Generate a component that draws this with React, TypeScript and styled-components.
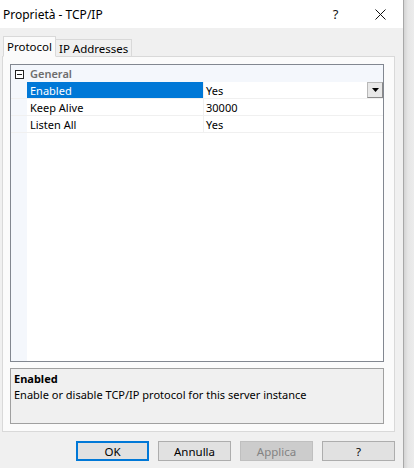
import { createGlobalStyle } from 'styled-components';
import styled from 'styled-components';

const GlobalStyle = createGlobalStyle`
  html, body {
    margin: 0;
    padding: 0;
    background: #e4e4e4;
  }
  body {
    font-family: 'Noto Sans', 'Open Sans', sans-serif;
    font-size: 11px;
    color: #000;
  }
`;

type Row = { name: string; value: string; selected?: boolean };

const rows: Row[] = [
  { name: 'Enabled', value: 'Yes', selected: true },
  { name: 'Keep Alive', value: '30000' },
  { name: 'Listen All', value: 'Yes' },
];

const buttons = [
  { label: 'OK', kind: 'default' },
  { label: 'Annulla', kind: 'normal' },
  { label: 'Applica', kind: 'disabled' },
  { label: '?', kind: 'normal' },
] as const;

const App = () => {
  return (
    <>
      <GlobalStyle />
      <Screen>
        <Window>
          <TitleBar>
            <Title>Proprietà - TCP/IP</Title>
            <TitleButtons>
              <TitleButton>?</TitleButton>
              <TitleButton>
                <svg width="11" height="11" viewBox="0 0 11 11">
                  <path d="M0.5 0.5 L10.5 10.5 M10.5 0.5 L0.5 10.5" stroke="#111" strokeWidth="1" />
                </svg>
              </TitleButton>
            </TitleButtons>
          </TitleBar>

          <Body>
            <Tabs>
              <Tab $active>Protocol</Tab>
              <Tab>IP Addresses</Tab>
            </Tabs>
            <TabPanel>
              <Grid>
                <CategoryRow>
                  <Margin>
                    <Collapse>
                      <svg width="9" height="9" viewBox="0 0 9 9">
                        <rect x="0.5" y="0.5" width="8" height="8" fill="#fff" stroke="#222" />
                        <path d="M2 4.5 H7" stroke="#222" />
                      </svg>
                    </Collapse>
                  </Margin>
                  <CategoryName>General</CategoryName>
                </CategoryRow>
                {rows.map((r) => (
                  <PropRow key={r.name}>
                    <Margin />
                    <PropName $selected={r.selected}>{r.name}</PropName>
                    <PropValue>
                      <span>{r.value}</span>
                      {r.selected && (
                        <DropButton>
                          <svg width="7" height="4" viewBox="0 0 7 4">
                            <path d="M0 0 H7 L3.5 4 Z" fill="#000" />
                          </svg>
                        </DropButton>
                      )}
                    </PropValue>
                  </PropRow>
                ))}
                <GridFill>
                  <Margin />
                </GridFill>
              </Grid>
              <HelpBox>
                <HelpTitle>Enabled</HelpTitle>
                <HelpText>Enable or disable TCP/IP protocol for this server instance</HelpText>
              </HelpBox>
            </TabPanel>
            <ButtonBar>
              {buttons.map((b) => (
                <DialogButton key={b.label} $kind={b.kind}>
                  {b.label}
                </DialogButton>
              ))}
            </ButtonBar>
          </Body>
        </Window>
        <Shadow />
      </Screen>
    </>
  );
};

const Screen = styled.div`
  display: flex;
  width: 414px;
  height: 468px;
  overflow: hidden;
`;

const Window = styled.div`
  width: 403px;
  flex-shrink: 0;
  display: flex;
  flex-direction: column;
  background: #f0f0f0;
  border-right: 1px solid #a8a8a8;
`;

const Shadow = styled.div`
  flex: 1;
  background: linear-gradient(to right, #d4d4d4, #e6e6e6 4px, #ececec);
`;

const TitleBar = styled.div`
  height: 28px;
  background: #fff;
  display: flex;
  align-items: center;
  justify-content: space-between;
`;

const Title = styled.div`
  padding-left: 3px;
  font-size: 12px;
  color: #000;
`;

const TitleButtons = styled.div`
  display: flex;
  height: 100%;
`;

const TitleButton = styled.div`
  width: 45px;
  height: 100%;
  display: flex;
  align-items: center;
  justify-content: center;
  font-size: 13px;
  color: #111;
`;

const Body = styled.div`
  flex: 1;
  display: flex;
  flex-direction: column;
  padding: 7px 8px 0 2px;
`;

const Tabs = styled.div`
  display: flex;
  align-items: flex-end;
  height: 21px;
  padding-left: 1px;
  position: relative;
  z-index: 1;
`;

const Tab = styled.div<{ $active?: boolean }>`
  display: flex;
  align-items: center;
  padding: ${(p) => (p.$active ? '0 3px 1px' : '0 3px')};
  height: ${(p) => (p.$active ? '21px' : '18px')};
  margin-bottom: -1px;
  box-sizing: border-box;
  background: ${(p) => (p.$active ? '#fbfbfb' : '#f0f0f0')};
  border: 1px solid #d9d9d9;
  border-bottom: ${(p) => (p.$active ? '1px solid #fbfbfb' : '1px solid #d9d9d9')};
  ${(p) => !p.$active && 'border-left: none;'}
  font-size: 11.5px;
  color: #000;
`;

const TabPanel = styled.div`
  height: 376px;
  box-sizing: border-box;
  background: #fbfbfb;
  border: 1px solid #d9d9d9;
  padding: 7px 10px 7px 7px;
  display: flex;
  flex-direction: column;
  gap: 6px;
`;

const Grid = styled.div`
  height: 298px;
  box-sizing: border-box;
  border: 1px solid #828790;
  background: #fff;
  display: flex;
  flex-direction: column;
`;

const Margin = styled.div`
  width: 16px;
  flex-shrink: 0;
  background: #f4f7fc;
  display: flex;
  align-items: center;
  justify-content: center;
`;

const Collapse = styled.div`
  display: flex;
  margin-top: 1px;
`;

const CategoryRow = styled.div`
  display: flex;
  height: 17px;
  background: #f4f7fc;
`;

const CategoryName = styled.div`
  padding-left: 3px;
  display: flex;
  align-items: center;
  font-weight: 600;
  color: #6d6d6d;
`;

const PropRow = styled.div`
  display: flex;
  height: 17px;
  box-sizing: border-box;
  border-bottom: 1px solid #f0f0f0;
`;

const PropName = styled.div<{ $selected?: boolean }>`
  width: 177px;
  flex-shrink: 0;
  box-sizing: border-box;
  padding-left: 3px;
  display: flex;
  align-items: center;
  border-right: 1px solid #f0f0f0;
  background: ${(p) => (p.$selected ? '#0078d7' : '#fff')};
  color: ${(p) => (p.$selected ? '#fff' : '#000')};
`;

const PropValue = styled.div`
  flex: 1;
  display: flex;
  align-items: center;
  justify-content: space-between;
  padding-left: 2px;
`;

const DropButton = styled.div`
  width: 16px;
  height: 16px;
  box-sizing: border-box;
  background: #e8e8e8;
  border: 1px solid #b8b8b8;
  border-right-color: #8a8a8a;
  border-bottom-color: #8a8a8a;
  display: flex;
  align-items: center;
  justify-content: center;
`;

const GridFill = styled.div`
  flex: 1;
  display: flex;
`;

const HelpBox = styled.div`
  height: 56px;
  box-sizing: border-box;
  border: 1px solid #a0a0a0;
  background: #f0f0f0;
  padding: 2px 3px;
`;

const HelpTitle = styled.div`
  font-weight: 700;
  line-height: 16px;
`;

const HelpText = styled.div`
  line-height: 16px;
`;

const ButtonBar = styled.div`
  display: flex;
  justify-content: flex-end;
  gap: 9px;
  padding-top: 9px;
`;

const DialogButton = styled.div<{ $kind: 'default' | 'normal' | 'disabled' }>`
  width: 73px;
  height: 20px;
  box-sizing: border-box;
  display: flex;
  align-items: center;
  justify-content: center;
  font-size: 11.5px;
  background: ${(p) => (p.$kind === 'disabled' ? '#cccccc' : '#e1e1e1')};
  color: ${(p) => (p.$kind === 'disabled' ? '#838383' : '#000')};
  border: ${(p) =>
    p.$kind === 'default'
      ? '2px solid #0078d7'
      : p.$kind === 'disabled'
      ? '1px solid #bfbfbf'
      : '1px solid #adadad'};
`;

export default App;
